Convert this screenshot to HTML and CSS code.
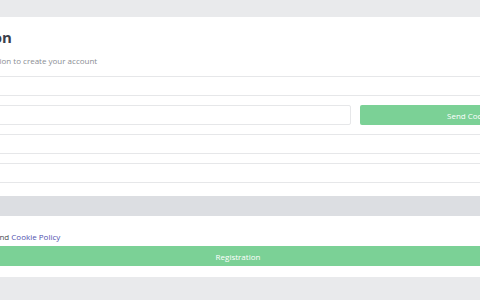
FILE: index.html
```html
<!DOCTYPE html>
<html>
<head>
<meta charset="utf-8">
<link rel="stylesheet" href="styles.css">
</head>
<body>
<div class="page">
  <div class="card">
    <div class="form">
      <h1 class="title">Registration</h1>
      <p class="subtitle">Enter your information to create your account</p>
      <div class="field"></div>
      <div class="row">
        <div class="field grow"></div>
        <button class="send">Send Code</button>
      </div>
      <div class="field"></div>
      <div class="field"></div>
    </div>
  </div>
  <div class="band"></div>
  <div class="card bottom">
    <div class="form">
      <p class="agree">I agree to the Terms and <a class="link">Cookie Policy</a></p>
      <button class="register">Registration</button>
    </div>
  </div>
</div>
</body>
</html>
```
FILE: styles.css
```css
html, body {
  margin: 0;
  padding: 0;
  background: #e9eaec;
  overflow: hidden;
  font-family: "Open Sans", "Liberation Sans", sans-serif;
}
.page {
  width: 480px;
  height: 300px;
  padding-top: 17px;
  box-sizing: border-box;
  overflow: hidden;
}
.card {
  background: #ffffff;
}
.form {
  margin-left: -74px;
  width: 624px;
  display: flex;
  flex-direction: column;
}
.card:first-child .form {
  padding: 10px 0 13px;
}
.title {
  margin: 0 0 0 -6px;
  font-size: 15px;
  line-height: 20px;
  font-weight: 700;
  color: #3b3f4a;
}
.subtitle {
  margin: 8px 0 0;
  font-size: 8px;
  line-height: 12px;
  color: #8a8d93;
}
.field {
  height: 20px;
  box-sizing: border-box;
  border: 1px solid #e6e7e9;
  border-radius: 2px;
  background: #fff;
  margin-top: 9px;
}
.row {
  display: flex;
  gap: 9px;
  margin-top: 9px;
}
.row .field {
  margin-top: 0;
}
.grow {
  flex: 1;
}
.send {
  width: 190px;
  height: 20px;
  border: none;
  border-radius: 2px;
  background: #7bd196;
  color: #ffffff;
  font-family: inherit;
  font-size: 8px;
  padding: 0 0 0 24px;
}
.band {
  height: 20px;
  background: #dcdee2;
}
.bottom .form {
  padding: 15px 0 11px;
}
.agree {
  margin: 0 0 3px -8px;
  font-size: 8px;
  line-height: 12px;
  color: #4a4d55;
}
.link {
  color: #4f4fae;
}
.register {
  height: 20px;
  border: none;
  border-radius: 2px;
  background: #7bd196;
  color: #ffffff;
  font-family: inherit;
  font-size: 8px;
  padding: 0;
}
```
